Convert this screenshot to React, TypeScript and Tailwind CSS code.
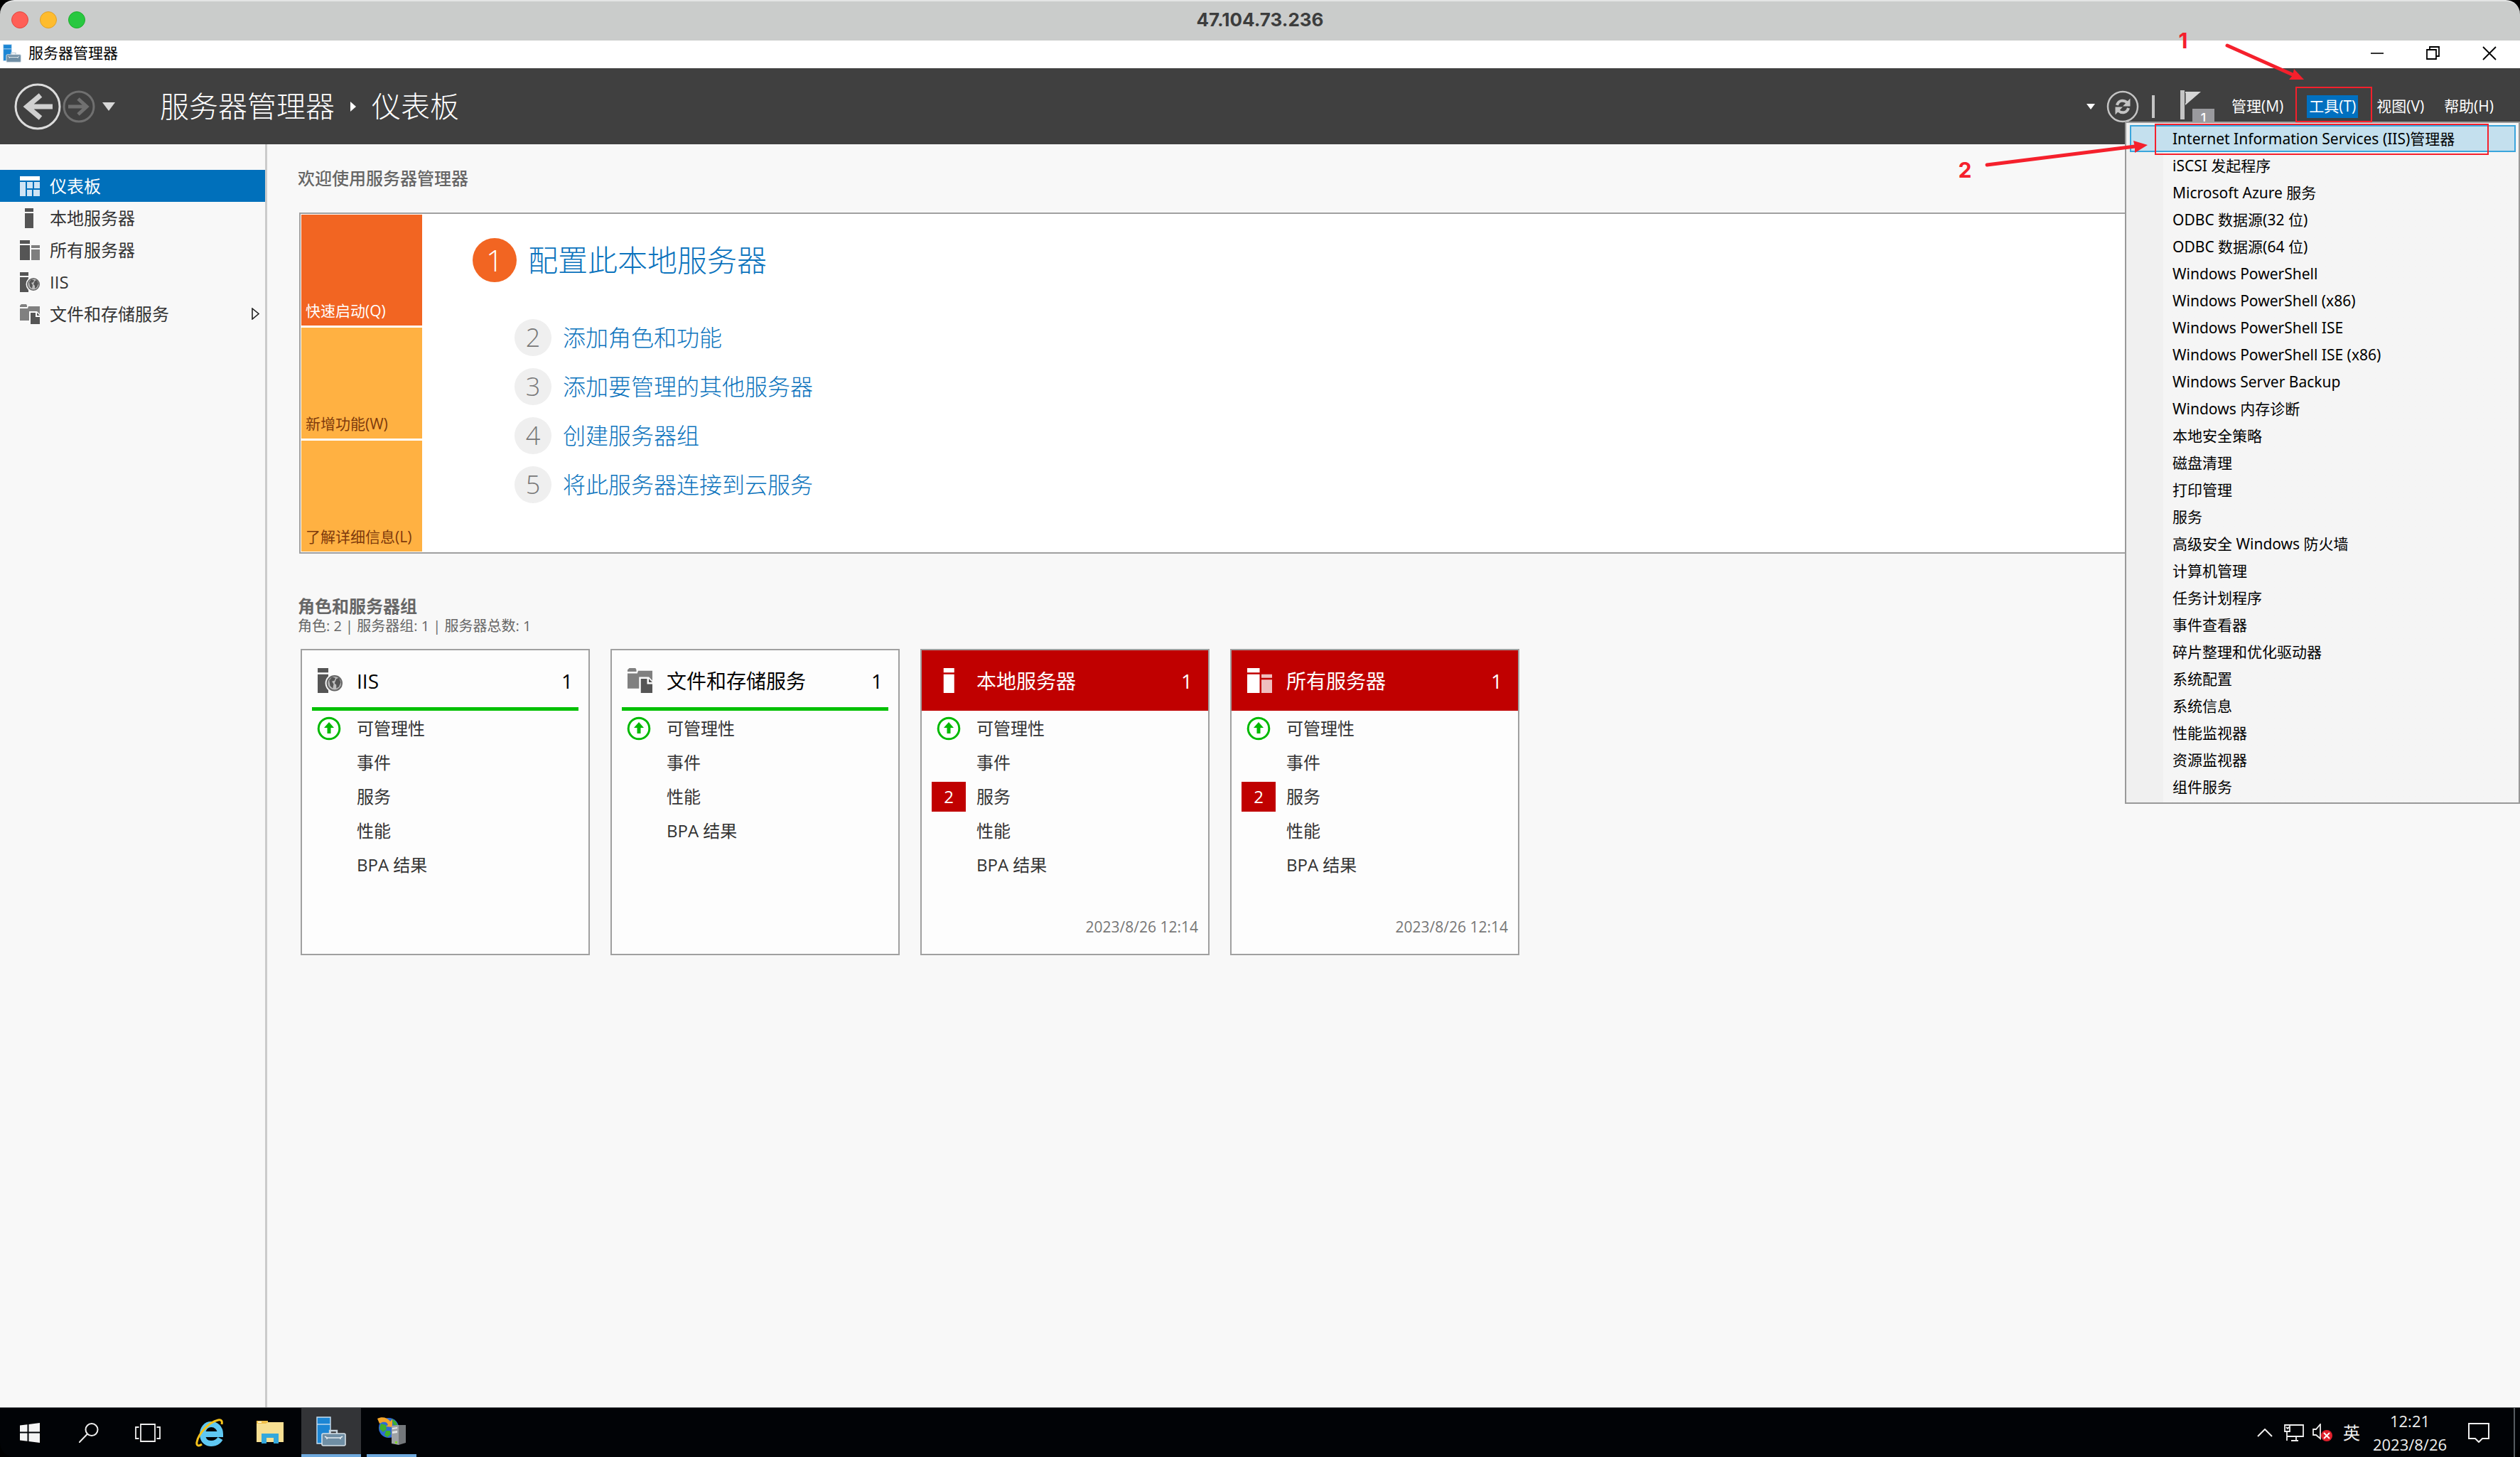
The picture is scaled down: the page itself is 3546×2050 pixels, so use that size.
import type { ReactNode } from "react";

const TOOLS = [
  "Internet Information Services (IIS)管理器",
  "iSCSI 发起程序",
  "Microsoft Azure 服务",
  "ODBC 数据源(32 位)",
  "ODBC 数据源(64 位)",
  "Windows PowerShell",
  "Windows PowerShell (x86)",
  "Windows PowerShell ISE",
  "Windows PowerShell ISE (x86)",
  "Windows Server Backup",
  "Windows 内存诊断",
  "本地安全策略",
  "磁盘清理",
  "打印管理",
  "服务",
  "高级安全 Windows 防火墙",
  "计算机管理",
  "任务计划程序",
  "事件查看器",
  "碎片整理和优化驱动器",
  "系统配置",
  "系统信息",
  "性能监视器",
  "资源监视器",
  "组件服务",
];

const STEPS = ["添加角色和功能", "添加要管理的其他服务器", "创建服务器组", "将此服务器连接到云服务"];

type IconProps = { className?: string };

function DashboardIcon({ className }: IconProps) {
  return (
    <svg viewBox="0 0 28 28" className={className}>
      <path fill="#fff" d="M0 0h28v6H0z" />
      <path fill="#cfe4f4" d="M0 8h8v20H0zM10 8h8v9h-8zM20 8h8v9h-8zM10 19h7v9h-7zM19 19h9v9h-9z" />
    </svg>
  );
}

function ServerIcon({ className }: IconProps) {
  return (
    <svg viewBox="0 0 28 28" fill="currentColor" className={className}>
      <path d="M7 0h12v5H7zM7 7h12v21H7z" />
    </svg>
  );
}

function ServersIcon({ className }: IconProps) {
  return (
    <svg viewBox="0 0 28 28" fill="currentColor" className={className}>
      <path d="M0 0h14v5H0zM0 7h14v21H0z" />
      <path opacity="0.75" d="M16 7h12v4H16zM16 13h12v15H16z" />
    </svg>
  );
}

function IisIcon({ className }: IconProps) {
  return (
    <svg viewBox="0 0 28 28" className={className}>
      <path fill="#555" d="M0 0h12v5H0zM0 7h12v21H0z" />
      <circle cx="19" cy="17" r="10.500" fill="#fbfbfb" />
      <circle cx="19" cy="17" r="8.200" fill="#bdbdbd" stroke="#666" strokeWidth="1.600" />
      <path fill="#555" d="M13 14l3-4 4 1-1 3-3 1 2 3-1 5-3-3zM21 12l3-1 2 5-2 5-3 2 0-4-2-2z" />
    </svg>
  );
}

function FilesIcon({ className }: IconProps) {
  return (
    <svg viewBox="0 0 28 28" className={className}>
      <path fill="#808080" d="M0 2l2-2h7l1 2v2H0zM0 6h11l1-3h16v20H0z" />
      <path fill="#fbfbfb" d="M13 10h11l4 4v14H13z" />
      <path fill="#555" d="M15 12h7v6h6v10H15zM24 12l4 4h-4z" />
    </svg>
  );
}

function UpIcon({ className }: IconProps) {
  return (
    <svg viewBox="0 0 34 34" className={className}>
      <circle cx="17" cy="17" r="14.800" fill="#fff" stroke="#00b900" strokeWidth="3" />
      <path fill="#00b900" d="M17 8l7 8h-4.500v8h-5v-8H10z" />
    </svg>
  );
}

function ManagerIcon({ className }: IconProps) {
  return (
    <svg viewBox="0 0 42 42" className={className}>
      <path fill="#1c86d4" stroke="#c9dff0" strokeWidth="1.400" d="M1 1h19v37H1z" />
      <path stroke="#c9dff0" strokeWidth="1.400" d="M1 11h19" />
      <path fill="none" stroke="#c6d3dc" strokeWidth="2.400" d="M19 24v-4h10v4" />
      <rect x="8" y="24" width="33" height="17" rx="2" fill="#6f8ea4" stroke="#d5dfe6" strokeWidth="1.600" />
      <path fill="none" stroke="#e4ebf0" strokeWidth="1.600" d="M12 28l3 2h19l3-2M15 29v3M34 29v3" />
    </svg>
  );
}

const NAV = [
  { label: "仪表板", icon: DashboardIcon, active: true },
  { label: "本地服务器", icon: ServerIcon },
  { label: "所有服务器", icon: ServersIcon },
  { label: "IIS", icon: IisIcon },
  { label: "文件和存储服务", icon: FilesIcon, arrow: true },
];

const CARDS = [
  { title: "IIS", icon: IisIcon, rows: ["可管理性", "事件", "服务", "性能", "BPA 结果"] },
  { title: "文件和存储服务", icon: FilesIcon, rows: ["可管理性", "事件", "性能", "BPA 结果"] },
  { title: "本地服务器", icon: ServerIcon, rows: ["可管理性", "事件", "服务", "性能", "BPA 结果"], date: "2023/8/26 12:14" },
  { title: "所有服务器", icon: ServersIcon, rows: ["可管理性", "事件", "服务", "性能", "BPA 结果"], date: "2023/8/26 12:14" },
];

function MacBar() {
  return (
    <div className="relative flex h-[57px] items-center justify-center rounded-t-[20px] border-t-2 border-[#e4e5e5] bg-[#cacccb] pb-1">
      <div className="absolute left-4 flex gap-4">
        <button aria-label="关闭" className="size-6 rounded-full border border-[#e2463f] bg-[#ff5f57]" />
        <button aria-label="最小化" className="size-6 rounded-full border border-[#e0a028] bg-[#febc2e]" />
        <button aria-label="缩放" className="size-6 rounded-full border border-[#1dad2b] bg-[#28c840]" />
      </div>
      <span className="font-['Inter',sans-serif] text-[26px] font-bold text-[#3c3d3d]">47.104.73.236</span>
    </div>
  );
}

function WindowBar() {
  return (
    <div className="flex h-[39px] items-center bg-white pb-1 pl-1">
      <ManagerIcon className="size-[26px]" />
      <span className="ml-2.5 text-[21px] text-black">服务器管理器</span>
      <div className="ml-auto flex pr-1">
        <button aria-label="最小化窗口" className="flex w-[79px] justify-center">
          <svg viewBox="0 0 20 20" className="size-5" stroke="#000" strokeWidth="1.600">
            <path d="M1 10h18" />
          </svg>
        </button>
        <button aria-label="还原窗口" className="flex w-[79px] justify-center">
          <svg viewBox="0 0 20 20" className="size-5" fill="none" stroke="#000" strokeWidth="1.800">
            <path d="M1 5h13v13H1zM5 5V1h13v13h-4" />
          </svg>
        </button>
        <button aria-label="关闭窗口" className="flex w-[79px] justify-center">
          <svg viewBox="0 0 20 20" className="size-5" stroke="#000" strokeWidth="1.800">
            <path d="M1 1l18 18M19 1L1 19" />
          </svg>
        </button>
      </div>
    </div>
  );
}

function ToolsMenu() {
  return (
    <div
      role="menu"
      className="absolute top-[75px] right-0 z-10 w-[556px] border-2 border-[#999] bg-[#f5f5f5] bg-linear-to-r from-[#f0f0f0] from-[52px] to-[#f5f5f5] to-[52px] py-[3px] pr-1 pl-[5px] font-['Noto_Sans','Noto_Sans_CJK_SC',sans-serif] text-black"
    >
      {TOOLS.map((tool, i) => (
        <button
          key={tool}
          role="menuitem"
          className={
            i === 0
              ? "block h-[38px] w-full border-2 border-[#3aa5dc] bg-[#c4e0ee] pl-[58px] text-left text-[21px] leading-[34px]"
              : "block h-[38px] w-full pl-[60px] text-left text-[21px] leading-[38px]"
          }
        >
          {tool}
        </button>
      ))}
    </div>
  );
}

function Header() {
  return (
    <header className="relative flex h-[107px] items-center bg-[#404040] pl-5 text-white">
      <button aria-label="后退">
        <svg viewBox="0 0 66 66" className="size-[66px]" fill="none">
          <circle cx="33" cy="33" r="31" stroke="#dcdcdc" strokeWidth="3" />
          <path stroke="#d0d0d0" strokeWidth="7" d="M54 33H18M37 17L18 33l19 16" />
        </svg>
      </button>
      <button aria-label="前进" className="ml-0.5">
        <svg viewBox="0 0 46 46" className="size-[46px]" fill="none" stroke="#707070">
          <circle cx="23" cy="23" r="21" strokeWidth="3" />
          <path strokeWidth="5" d="M8 23h27M22 12l12 11-12 11" />
        </svg>
      </button>
      <button aria-label="历史记录" className="ml-2.5">
        <svg viewBox="0 0 18 12" className="h-3 w-[18px]" fill="#d8d8d8">
          <path d="M0 0h18L9 12z" />
        </svg>
      </button>
      <h1 className="ml-[63px] flex items-center text-[41px] font-light">
        服务器管理器
        <svg viewBox="0 0 8 14" className="mx-[22px] h-3.5 w-2" fill="#fff">
          <path d="M0 0l8 7-8 7z" />
        </svg>
        仪表板
      </h1>

      <div className="ml-auto flex items-center pr-[37px] text-[21px]">
        <svg viewBox="0 0 12 8" className="mr-4 h-2 w-3" fill="#fff">
          <path d="M0 0h12L6 8z" />
        </svg>
        <button aria-label="刷新">
          <svg viewBox="0 0 46 46" className="size-[46px]" fill="none" stroke="#c4c4c4">
            <circle cx="23" cy="23" r="21" strokeWidth="2.500" />
            <path strokeWidth="4" d="M15 21c2-7 9-8 14-4M31 25c-2 7-9 8-14 4" />
            <path fill="#c4c4c4" stroke="none" d="M33.500 11.500v11H23zM12.500 34.500v-11H23z" />
          </svg>
        </button>
        <span className="ml-[18px] h-8 w-1 bg-[#c4c4c4]" />
        <button aria-label="通知" className="relative ml-9 h-[54px] w-12">
          <svg viewBox="0 0 48 54" className="h-[54px] w-12">
            <path fill="#c4c4c4" d="M0 4h6v41H0z" />
            <path fill="#d6d6d6" d="M7 6h22L7 25z" />
            <path fill="#808080" d="M7 8h1v14H7z" />
          </svg>
          <span className="absolute top-[30px] left-[17px] flex h-7 w-[31px] items-center justify-center bg-[#9a9a9e] font-['Inter',sans-serif] text-lg font-medium">
            1
          </span>
        </button>
        <button className="ml-6">管理(M)</button>
        <button className="ml-[33px] h-8 bg-[#0070c0] px-[3px]">工具(T)</button>
        <button className="ml-[26px]">视图(V)</button>
        <button className="ml-7">帮助(H)</button>
      </div>
      <ToolsMenu />
    </header>
  );
}

function Sidebar() {
  return (
    <nav className="w-[376px] shrink-0 border-r-3 border-[#cbcbcb] pt-9">
      {NAV.map(({ label, icon: Icon, active, arrow }) => (
        <a
          key={label}
          href="#"
          className={
            active
              ? "flex h-[45px] items-center bg-[#0070bb] pr-2 pl-7 text-2xl text-white"
              : "flex h-[45px] items-center pr-2 pl-7 text-2xl text-[#333]"
          }
        >
          <Icon className={active ? "size-7" : "size-7 text-[#555]"} />
          <span className="ml-3.5">{label}</span>
          {arrow && (
            <svg viewBox="0 0 11 17" className="ml-auto h-[17px] w-[11px]" fill="none" stroke="#222" strokeWidth="1.600">
              <path d="M1 1l9 7.500L1 16z" />
            </svg>
          )}
        </a>
      ))}
    </nav>
  );
}

function Welcome() {
  return (
    <section className="mt-[30px] ml-0.5 flex border-2 border-[#a0a0a0] bg-white p-px">
      <div className="flex w-[170px] flex-col gap-[3px]">
        <button className="flex h-[156px] items-end bg-[#f26522] px-1.5 pb-[5px] text-[21px] text-white">快速启动(Q)</button>
        <button className="flex h-[156px] items-end bg-[#ffb142] px-1.5 pb-[5px] text-[21px] text-[#7d3a0c]">
          新增功能(W)
        </button>
        <button className="flex h-[156px] items-end bg-[#ffb142] px-1.5 pb-[5px] text-[21px] text-[#7d3a0c]">
          了解详细信息(L)
        </button>
      </div>
      <div className="pt-8 pl-[71px] font-light text-[#0b73bd]">
        <div className="flex items-center">
          <span className="flex size-[62px] items-center justify-center rounded-full bg-[#f26522] text-[42px] text-white">
            1
          </span>
          <a href="#" className="ml-4 text-[42px]">配置此本地服务器</a>
        </div>
        <ol className="mt-[52px] ml-[59px] flex flex-col gap-[17px]">
          {STEPS.map((step, i) => (
            <li key={step} className="flex h-[52px] items-center">
              <span className="flex size-[52px] items-center justify-center rounded-full bg-[#efefef] text-[36px] text-[#777]">
                {i + 2}
              </span>
              <a href="#" className="ml-4 text-[32px]">{step}</a>
            </li>
          ))}
        </ol>
      </div>
    </section>
  );
}

function GroupCard({ title, icon: Icon, rows, date }: (typeof CARDS)[number]) {
  const alert = Boolean(date);
  return (
    <article className="flex h-[431px] w-[407px] flex-col border-2 border-[#a0a0a0] bg-[#fdfdfd]">
      <div className={alert ? "bg-[#c00000] px-3.5 text-white" : "px-3.5 text-black"}>
        <div
          className={
            alert
              ? "flex h-[85px] items-center pr-2 pl-2 text-[28px]"
              : "flex h-[85px] items-center border-b-5 border-[#00c000] pt-[5px] pr-2 pl-2 text-[28px]"
          }
        >
          <Icon className="size-[35px]" />
          <h3 className="ml-5">{title}</h3>
          <span className="ml-auto">1</span>
        </div>
      </div>
      <ul className="pt-px pl-3.5 text-2xl text-[#333]">
        {rows.map((row) => (
          <li key={row} className="flex h-12 items-center">
            <span className="flex w-12 justify-center">
              {row === "可管理性" && <UpIcon className="size-[34px]" />}
              {alert && row === "服务" && (
                <span className="flex h-[42px] w-12 items-center justify-center bg-[#c00000] text-white">2</span>
              )}
            </span>
            <a href="#" className="ml-[15px]">{row}</a>
          </li>
        ))}
      </ul>
      {date && <time className="mt-auto pr-3.5 pb-[22px] text-right text-[21px] text-[#777]">{date}</time>}
    </article>
  );
}

function TaskButton({ label, className, children }: { label: string; className: string; children: ReactNode }) {
  return (
    <button aria-label={label} className={className}>
      {children}
    </button>
  );
}

function Taskbar() {
  return (
    <footer className="flex h-[70px] items-stretch rounded-b-[20px] border-t border-[#5b5f61] bg-[#010306] text-[#eee]">
      <TaskButton label="开始" className="flex w-[84px] items-center justify-center">
        <svg viewBox="0 0 28 28" className="size-7" fill="#f4f4f4">
          <path d="M0 3.600l10.500-1.400v10.300H0zM12.500 2L28 0v12.500H12.500zM0 14.500h10.500v11.200L0 24.400zM12.500 14.500H28V28l-15.500-2z" />
        </svg>
      </TaskButton>
      <TaskButton label="搜索" className="flex w-[82px] items-center justify-center">
        <svg viewBox="0 0 28 28" className="size-7" fill="none" stroke="#eee" strokeWidth="2">
          <circle cx="18" cy="9.500" r="8.500" />
          <path d="M12 15.500L0 28" />
        </svg>
      </TaskButton>
      <TaskButton label="任务视图" className="flex w-[84px] items-center justify-center">
        <svg viewBox="0 0 36 28" className="h-7 w-9" fill="none" stroke="#eee" strokeWidth="1.800">
          <path d="M8 2h20v24H8zM5.500 6H1v16h4.500M30.500 6H35v16h-4.500" />
        </svg>
      </TaskButton>
      <TaskButton label="Internet Explorer" className="flex w-[90px] items-center justify-center">
        <svg viewBox="0 0 40 40" className="size-10" fill="none">
          <path stroke="#5fc8f2" strokeWidth="8" d="M35 28c-3 5-8 7-13 7-7 0-12-5-12-13S15 8 22 8s13 5 13 14H11" />
          <path stroke="#f5c21b" strokeWidth="3" d="M9 36c-4 3-8 3-7-3C4 22 18 5 32 2c5-1 6 2 5 6" />
        </svg>
      </TaskButton>
      <TaskButton label="文件资源管理器" className="flex w-[84px] items-center justify-center pr-1">
        <svg viewBox="0 0 38 34" className="h-[34px] w-[38px]">
          <path fill="#f0c04a" d="M0 0h16v6H0z" />
          <path fill="#fff3c9" d="M2 1h5v2H2z" />
          <path fill="#f7df92" d="M0 4h13l3-2h22v28H0z" />
          <path fill="#34a8dc" d="M7 18h24v14h-7v-8H14v8H7z" />
        </svg>
      </TaskButton>
      <TaskButton
        label="服务器管理器"
        className="flex w-[84px] items-center justify-center border-b-4 border-[#6ea8dc] bg-[#333437]"
      >
        <ManagerIcon className="size-[42px]" />
      </TaskButton>
      <TaskButton
        label="IIS 管理器"
        className="ml-2 flex w-[70px] items-center justify-center border-b-4 border-[#6ea8dc]"
      >
        <svg viewBox="0 0 40 40" className="size-10">
          <circle cx="16" cy="15" r="14" fill="#2f6ad6" />
          <path fill="#3fb02c" d="M5 9l7 2 1 6-5 4-5-5zM12 19l6 0 1 5-5 4-4-3zM20 2l6 4 3 6-6-1z" />
          <path fill="#f3a52a" d="M0 2l3 7 4-2c4-1 7 0 8 4l-3 2 9 1V3l-3 3C14 0 6-1 0 2z" />
          <path fill="#9fa3a6" d="M20 12l10-1v28l-10-2z" />
          <path fill="#e3e5e6" d="M21 15l7-1v2l-7 1zM21 20l7-1v3l-7 1z" />
          <path fill="#74787b" d="M30 11h10v25l-10 3z" />
          <path fill="#7fd62c" d="M25 34h3v3h-3z" />
        </svg>
      </TaskButton>

      <div className="ml-auto flex items-center pr-[7px]">
        <svg viewBox="0 0 22 12" className="h-3 w-[22px]" fill="none" stroke="#eee" strokeWidth="2">
          <path d="M1 11L11 1l10 10" />
        </svg>
        <svg viewBox="0 0 28 24" className="ml-4 h-6 w-7" fill="none" stroke="#eee" strokeWidth="1.800">
          <path d="M8 1h19v16H4M1 1h7v9H1zM4 10v13M17 17v5M10 23h10M3 4l2 2 2-2" />
        </svg>
        <svg viewBox="0 0 28 26" className="ml-3 h-[26px] w-7" fill="none">
          <path stroke="#eee" strokeWidth="1.800" d="M1 8h4l6-7v20l-6-5H1z" />
          <circle cx="20" cy="17" r="8" fill="#e0202c" />
          <path stroke="#fff" strokeWidth="2" d="M16 13l8 8M24 13l-8 8" />
        </svg>
        <span className="ml-[15px] text-2xl">英</span>
        <time className="ml-4 w-[108px] text-center text-[22px] leading-[33px]">
          12:21
          <br />
          2023/8/26
        </time>
        <button aria-label="通知中心" className="ml-7">
          <svg viewBox="0 0 30 28" className="h-7 w-[30px]" fill="none" stroke="#eee" strokeWidth="2">
            <path d="M1 1h28v21H20l-5 5-5-5H1z" />
          </svg>
        </button>
        <span className="ml-[34px] h-full w-0.5 bg-[#555b60]" />
      </div>
    </footer>
  );
}

// Red call-outs pointing at the tools menu
function Annotations() {
  return (
    <svg
      viewBox="0 0 846 260"
      className="pointer-events-none absolute top-0 right-0 z-20 h-[260px] w-[846px]"
      fill="none"
      stroke="#f5202c"
    >
      <path strokeWidth="2" d="M531 123h106v48H531zM333 175h468v42H333z" />
      <path strokeWidth="5" strokeLinecap="round" d="M434 64l92 41M96 232l208-26" />
      <path fill="#f5202c" stroke="none" d="M542 112l-21 0 5-6 2-9zM322 204l-18 11 0-8-2-9z" />
      <g fill="#f5202c" stroke="none" textAnchor="middle" className="font-['Inter',sans-serif] text-[30px] font-bold">
        <text x="372" y="68">1</text>
        <text x="65" y="250">2</text>
      </g>
    </svg>
  );
}

export default function App() {
  return (
    <div className="bg-black">
      <div className="relative flex min-h-screen flex-col font-['Open_Sans','Noto_Sans_CJK_SC',sans-serif]">
        <MacBar />
        <WindowBar />
        <Header />
        <div className="flex flex-1 bg-[#f8f8f8]">
          <Sidebar />
          <main className="flex-1 pt-[30px] pr-5 pl-[43px]">
            <h2 className="text-2xl leading-9 font-medium text-[#666]">欢迎使用服务器管理器</h2>
            <Welcome />
            <h2 className="mt-[59px] text-2xl leading-[30px] font-bold text-[#666]">角色和服务器组</h2>
            <p className="text-xl leading-[26px] text-[#666]">角色: 2 | 服务器组: 1 | 服务器总数: 1</p>
            <div className="mt-[19px] ml-1 flex flex-wrap gap-[29px]">
              {CARDS.map((card) => (
                <GroupCard key={card.title} {...card} />
              ))}
            </div>
          </main>
        </div>
        <Taskbar />
        <Annotations />
      </div>
    </div>
  );
}
